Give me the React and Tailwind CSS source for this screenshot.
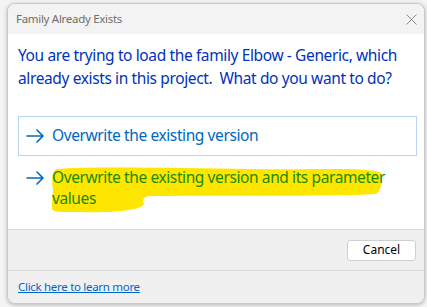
import React from "react";

const Arrow = ({ className }) => (
  <svg
    className={className}
    viewBox="0 0 18 14"
    fill="none"
    stroke="currentColor"
    strokeWidth="1.6"
    strokeLinecap="round"
    strokeLinejoin="round"
  >
    <path d="M1 7h16M11 1l6 6-6 6" />
  </svg>
);

export default function App() {
  return (
    <div
      className="w-[427px] h-[307px] bg-[#f4f4f4] overflow-hidden pt-[3px] pl-[7px]"
      style={{ fontFamily: '"Noto Sans", "Open Sans", sans-serif' }}
    >
      <div className="w-[418px] h-[301px] flex flex-col rounded-lg border border-[#c9c9c9] bg-[#f0f0f0] shadow-[0_1px_4px_rgba(0,0,0,0.25)] overflow-hidden">
        {/* title bar */}
        <div className="h-[30px] shrink-0 flex items-center justify-between pl-[8px] pr-[7px] bg-[#f3f3f3]">
          <span className="text-[11.5px] text-[#6e6e6e] tracking-[-0.3px]">
            Family Already Exists
          </span>
          <svg className="w-[11px] h-[11px] text-[#8a8a8a]" viewBox="0 0 11 11" stroke="currentColor" strokeWidth="1">
            <path d="M0.5 0.5l10 10M10.5 0.5l-10 10" />
          </svg>
        </div>

        {/* body */}
        <div className="h-[195px] shrink-0 bg-white pl-[10px] pr-[7px] pt-[10px]">
          <p className="text-[15.5px] leading-[23px] text-[#0033bc] tracking-[-0.38px]">
            You are trying to load the family Elbow - Generic, which already exists in this project.&nbsp; What do you want to do?
          </p>

          <div className="mt-[26px] h-[40px] flex items-center border border-[#b7d5f2] pl-[7px] text-[#0067c0]">
            <Arrow className="w-[18px] h-[14px] shrink-0" />
            <span className="ml-[8px] text-[15.5px] tracking-[-0.4px]">
              Overwrite the existing version
            </span>
          </div>

          <div className="relative mt-[11px] flex items-start pl-[8px] text-[#0067c0]">
            <Arrow className="w-[18px] h-[14px] shrink-0 mt-[4px]" />
            <svg
              className="absolute left-[34px] top-[-1px] w-[334px] h-[48px]"
              viewBox="0 0 334 48"
            >
              <path
                d="M4 3 C40 0 120 2 200 3 C260 4 310 1 328 6 C331 12 330 24 324 28 C270 31 180 29 100 30 C92 30 90 33 92 38 C90 44 62 47 30 46 C12 46 2 47 0 43 C-1 36 1 30 1 24 C0 16 -1 8 4 3 Z"
                fill="#ffe600"
              />
            </svg>
            <span className="relative ml-[8px] w-[340px] text-[15.5px] leading-[21px] tracking-[-0.4px] text-[#1b8a00]">
              Overwrite the existing version and its parameter values
            </span>
          </div>
        </div>

        {/* buttons */}
        <div className="h-[41px] shrink-0 flex items-center justify-end pr-[8px] border-t border-[#dadada] bg-[#f0f0f0]">
          <button className="w-[69px] h-[21px] bg-white border border-[#cfcfcf] rounded-[3px] text-[12px] text-black leading-none">
            Cancel
          </button>
        </div>

        {/* link */}
        <div className="flex-1 flex items-center pl-[10px] border-t border-[#dadada] bg-[#f0f0f0]">
          <a className="text-[11.5px] text-[#0066cc] underline tracking-[-0.3px]" href="#">
            Click here to learn more
          </a>
        </div>
      </div>
    </div>
  );
}
